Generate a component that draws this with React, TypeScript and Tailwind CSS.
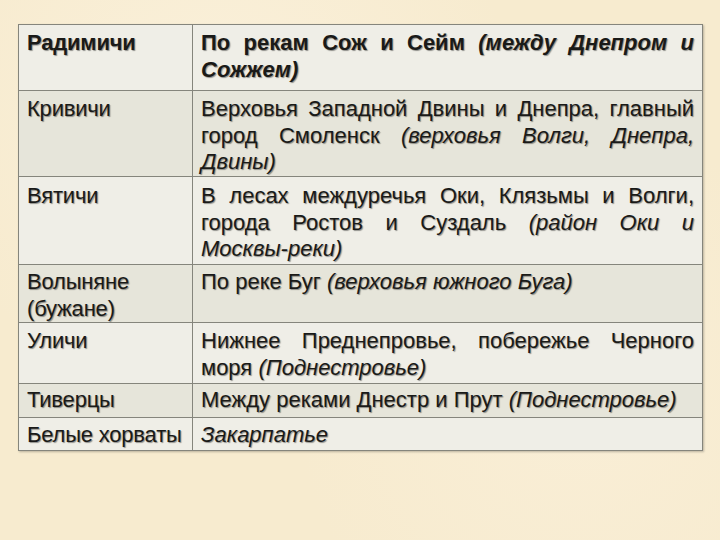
import React from 'react';

type Row = {
  tribe: React.ReactNode;
  lines: React.ReactNode[];
  height: string;
  shade: boolean;
  bold?: boolean;
  pad: string;
};

const rows: Row[] = [
  {
    tribe: 'Радимичи',
    lines: [
      <>По рекам Сож и Сейм <i>(между Днепром и</i></>,
      <i>Сожжем)</i>,
    ],
    height: 'h-[66px]',
    shade: false,
    bold: true,
    pad: 'pt-[5px]',
  },
  {
    tribe: 'Кривичи',
    lines: [
      'Верховья Западной Двины и Днепра, главный',
      <>город Смоленск <i>(верховья Волги, Днепра,</i></>,
      <i>Двины)</i>,
    ],
    height: 'h-[86px]',
    shade: true,
    pad: 'pt-[5px]',
  },
  {
    tribe: 'Вятичи',
    lines: [
      'В лесах междуречья Оки, Клязьмы и Волги,',
      <>города Ростов и Суздаль <i>(район Оки и</i></>,
      <i>Москвы-реки)</i>,
    ],
    height: 'h-[88px]',
    shade: false,
    pad: 'pt-[6px]',
  },
  {
    tribe: (
      <>
        Волыняне
        <br />
        (бужане)
      </>
    ),
    lines: [<>По реке Буг <i>(верховья южного Буга)</i></>],
    height: 'h-[58px]',
    shade: true,
    pad: 'pt-[4px]',
  },
  {
    tribe: 'Уличи',
    lines: [
      'Нижнее Преднепровье, побережье Черного',
      <>моря <i>(Поднестровье)</i></>,
    ],
    height: 'h-[61px]',
    shade: false,
    pad: 'pt-[5px]',
  },
  {
    tribe: 'Тиверцы',
    lines: [<>Между реками Днестр и Прут <i>(Поднестровье)</i></>],
    height: 'h-[34px]',
    shade: true,
    pad: 'pt-[3px]',
  },
  {
    tribe: 'Белые хорваты',
    lines: [<i>Закарпатье</i>],
    height: 'h-[33px]',
    shade: false,
    pad: 'pt-[4px]',
  },
];

export default function App() {
  return (
    <div className="w-[720px] h-[540px] overflow-hidden bg-[#f7ebcf] bg-[radial-gradient(circle_at_30%_20%,#faf0da_0%,transparent_45%),radial-gradient(circle_at_80%_75%,#f9eed6_0%,transparent_40%)] pt-[24px] pl-[18px]">
      <table className="w-[685px] border-collapse text-[22px] leading-[26.5px] text-[#1a1a18] [font-family:'Liberation_Sans',Arial,sans-serif] [text-shadow:1px_1px_1px_rgba(0,0,0,0.4)] shadow-[1px_1px_2px_rgba(0,0,0,0.25)]">
        <tbody>
          {rows.map((row, i) => (
            <tr
              key={i}
              className={`${row.height} ${row.shade ? 'bg-[#e6e5da]' : 'bg-[#efeee7]'} ${row.bold ? 'font-bold' : ''}`}
            >
              <td className={`w-[174px] border border-[#85857c] align-top px-2 whitespace-nowrap tracking-[-0.2px] ${row.pad}`}>
                {row.tribe}
              </td>
              <td className={`border border-[#85857c] align-top px-2 ${row.pad}`}>
                {row.lines.map((line, j) => (
                  <div
                    key={j}
                    className={`whitespace-nowrap ${j < row.lines.length - 1 ? 'text-justify [text-align-last:justify]' : 'text-left'}`}
                  >
                    {line}
                  </div>
                ))}
              </td>
            </tr>
          ))}
        </tbody>
      </table>
    </div>
  );
}
